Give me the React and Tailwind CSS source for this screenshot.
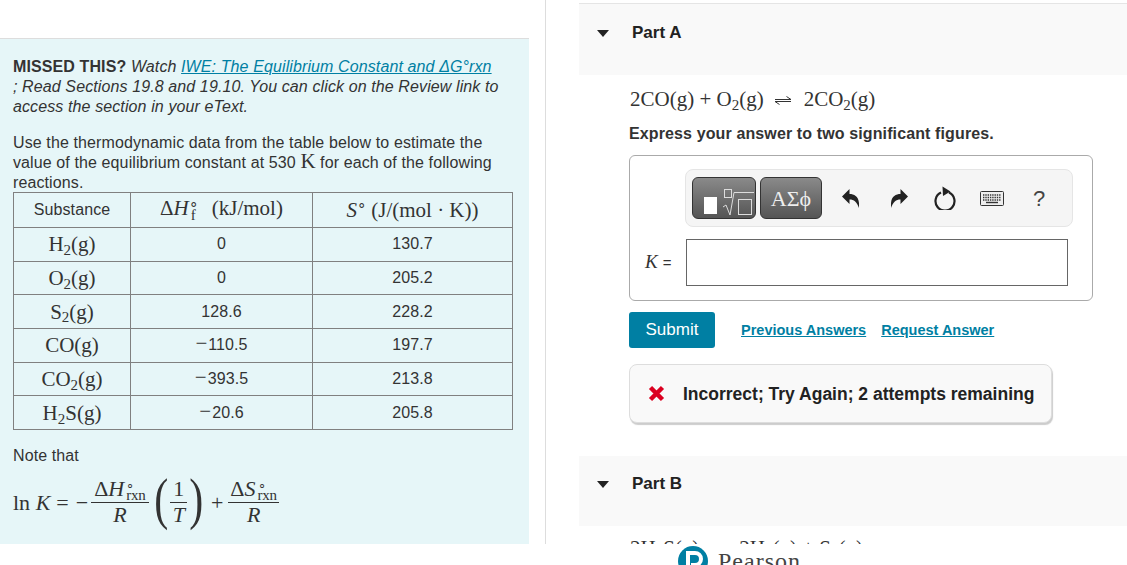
import React from "react";

const serif = "font-['Liberation_Serif',serif] tracking-normal";

const rows = [
  { name: "H", sub: "2", rest: "(g)", h: "0", s: "130.7" },
  { name: "O", sub: "2", rest: "(g)", h: "0", s: "205.2" },
  { name: "S", sub: "2", rest: "(g)", h: "128.6", s: "228.2" },
  { name: "CO", sub: "", rest: "(g)", h: "110.5", neg: true, s: "197.7" },
  { name: "CO", sub: "2", rest: "(g)", h: "393.5", neg: true, s: "213.8" },
  { name: "H", sub: "2", rest: "S(g)", h: "20.6", neg: true, s: "205.8" },
];

const Sub = ({ children }) => <sub className="text-[15px]">{children}</sub>;

const Rxn = () => (
  <span className="inline-flex flex-col items-start align-middle leading-none ml-[2px]">
    <span className="h-[9px] text-[13px] leading-[9px]">∘</span>
    <span className="text-[15px] leading-[13px] tracking-[-0.2px]">rxn</span>
  </span>
);

const Caret = () => (
  <svg width="12" height="7" viewBox="0 0 12 7" className="shrink-0">
    <path d="M0 0H12L6 7Z" fill="#222" />
  </svg>
);

const Band = ({ title, top }) => (
  <div className={`bg-[#f9f9f9] flex items-start pl-[18px] ${top ? "h-[72px] pt-[17px] border-t border-[#e5e5e5]" : "h-[70px] pt-[16px]"}`}>
    <div className="h-6 flex items-center">
      <Caret />
    </div>
    <span className="ml-[23px] font-bold text-[17px] leading-6 text-[#222]">{title}</span>
  </div>
);

const Harpoons = () => (
  <svg width="18" height="9" viewBox="0 0 18 9" className="inline-block ml-[10px] mr-[12px] align-[1px]">
    <path d="M1 3.5H17L12.5 0.5M17 5.5H1L5.5 8.5" fill="none" stroke="#333" strokeWidth="1" />
  </svg>
);

const ReplyIcon = ({ flip }) => (
  <svg width="17" height="19" viewBox="0 0 17 19" className={flip ? "-scale-x-100" : ""}>
    <path d="M0 7.5L7.5 0V5C13 5 18 8 17 19C15 13 12 10.5 7.5 10.5V15Z" fill="#222" />
  </svg>
);

const Reload = () => (
  <svg width="22" height="24" viewBox="0 0 22 24">
    <path d="M7 6.5A9.5 9.5 0 1 0 15 6.5" fill="none" stroke="#222" strokeWidth="2.2" />
    <path d="M8.5 0.5L16.5 5.5L9 10Z" fill="#222" />
  </svg>
);

const Keyboard = () => (
  <svg width="24" height="15" viewBox="0 0 24 15">
    <rect x="0.5" y="0.5" width="23" height="14" rx="1" fill="#eee" stroke="#333" />
    <path d="M3 4H21M3 6.5H21M3 9H21" stroke="#333" strokeWidth="1.4" strokeDasharray="1.4 0.9" />
    <path d="M6 11.5H18" stroke="#333" strokeWidth="1.4" />
  </svg>
);

const TemplateIcon = () => (
  <svg width="62" height="40" viewBox="0 0 62 40">
    <rect x="11" y="19" width="13" height="17" fill="#fff" />
    <rect x="31.5" y="11.5" width="7" height="8" fill="none" stroke="#ddd" />
    <path d="M30 29L33 27L37 37L41 14.5H61" fill="none" stroke="#ddd" />
    <rect x="45.5" y="21.5" width="13" height="15" fill="none" stroke="#ddd" />
  </svg>
);

export default function App() {
  return (
    <div className="w-[1127px] h-[565px] overflow-hidden bg-white text-[#333] font-['Liberation_Sans',Arial,sans-serif]">
      <div className="flex h-[544px]">
        {/* left column */}
        <div className="w-[546px] shrink-0 border-r border-[#ddd] pt-[38px]">
          <div className="w-[529px] h-[506px] bg-[#e6f6f8] border-t border-[#ddd] pl-[13px] pr-4 pt-[18px] text-[16px] leading-5 tracking-[0.11px]">
            <p className="mb-4 w-[490px]">
              <b>MISSED THIS?</b>{" "}
              <i>
                Watch{" "}
                <a className="text-[#007fa3] underline">IWE: The Equilibrium Constant and ΔG°rxn</a>
                <br />
                ; Read Sections 19.8 and 19.10. You can click on the Review link to access the section in your eText.
              </i>
            </p>
            <p className="w-[490px]">
              Use the thermodynamic data from the table below to estimate the value of the equilibrium constant at 530{" "}
              <span className={`${serif} text-[21px] leading-[0]`}>K</span> for each of the following reactions.
            </p>
            <table className="w-[500px] -mt-px border-collapse table-fixed border border-[#808080]">
              <thead>
                <tr className="h-[35px]">
                  <th className="w-[117px] border border-[#808080] font-normal">Substance</th>
                  <th className={`w-[182px] border border-[#808080] font-normal ${serif} text-[21px]`}>
                    Δ<i>H</i>
                    <span className="inline-flex flex-col align-middle leading-none text-[15px]">
                      <span className="h-[10px] leading-[10px]">∘</span>
                      <span className="leading-[13px]">f</span>
                    </span>
                    <span className="ml-[14px]">(kJ/mol)</span>
                  </th>
                  <th className={`border border-[#808080] font-normal ${serif} text-[21px]`}>
                    <i>S</i>
                    <sup className="text-[15px]">∘</sup> (J/(mol · K))
                  </th>
                </tr>
              </thead>
              <tbody>
                {rows.map((r, i) => (
                  <tr key={i} className="h-[33.7px] text-center">
                    <td className={`border border-[#808080] ${serif} text-[21px] leading-6`}>
                      {r.name}
                      {r.sub && <Sub>{r.sub}</Sub>}
                      {r.rest}
                    </td>
                    <td className="border border-[#808080]">
                      {r.neg && <span className={`mr-px ${serif} text-[21px] leading-[0]`}>−</span>}
                      {r.h}
                    </td>
                    <td className="border border-[#808080]">{r.s}</td>
                  </tr>
                ))}
              </tbody>
            </table>
            <p className="mt-4">Note that</p>
            <div className={`mt-[4px] flex items-center h-[66px] ${serif} text-[22px] leading-6 whitespace-nowrap`}>
              <span>
                ln <i>K</i>
              </span>
              <span className="ml-[6px]">=</span>
              <span className="ml-[7px]">−</span>
              <div className="flex flex-col items-center ml-[3px]">
                <span className="px-[3px] h-[26px] border-b border-[#333]">
                  Δ<i>H</i>
                  <Rxn />
                </span>
                <i className="h-[26px]">R</i>
              </div>
              <span className="ml-[3px] text-[56px] font-light leading-none -mt-2 scale-x-75">(</span>
              <div className="flex flex-col items-center">
                <span className="px-[3px] h-[26px] border-b border-[#333]">1</span>
                <i className="h-[26px]">T</i>
              </div>
              <span className="text-[56px] font-light leading-none -mt-2 scale-x-75">)</span>
              <span className="ml-[5px]">+</span>
              <div className="flex flex-col items-center ml-[5px]">
                <span className="px-[2px] h-[26px] border-b border-[#333]">
                  Δ<i>S</i>
                  <Rxn />
                </span>
                <i className="h-[26px]">R</i>
              </div>
            </div>
          </div>
        </div>

        {/* right column */}
        <div className="flex-1 pl-[33px] pt-[3px] overflow-hidden">
          <Band title="Part A" top />
          <div className="pl-[50px] pr-[34px]">
            <div className={`mt-[11px] h-[26px] pl-px ${serif} text-[21px] leading-[26px] whitespace-nowrap`}>
              2CO(g) + O<Sub>2</Sub>(g)
              <Harpoons />
              2CO<Sub>2</Sub>(g)
            </div>
            <p className="mt-[10px] font-bold text-[16px] leading-6 tracking-[0.12px]">Express your answer to two significant figures.</p>

            <div className="mt-[9px] w-[464px] h-[146px] border border-[#aaa] rounded-md pt-[13px] pl-[55px] pr-[19px]">
              <div className="h-[58px] bg-[#f5f5f5] border border-[#e5e5e5] rounded-lg flex items-center pl-[6px]">
                <button className="w-[64px] h-[42px] rounded-md border border-[#333] bg-gradient-to-b from-[#8a8a8a] to-[#555] flex items-center justify-center">
                  <TemplateIcon />
                </button>
                <button className={`ml-[4px] w-[62px] h-[42px] rounded-md border border-[#333] bg-gradient-to-b from-[#8a8a8a] to-[#555] text-[#eee] text-[22px] ${serif}`}>
                  ΑΣϕ
                </button>
                <div className="ml-[20px]">
                  <ReplyIcon />
                </div>
                <div className="ml-[32px]">
                  <ReplyIcon flip />
                </div>
                <div className="ml-[26px]">
                  <Reload />
                </div>
                <div className="ml-[24px]">
                  <Keyboard />
                </div>
                <span className="ml-[29px] text-[22px] text-[#444]">?</span>
              </div>
              <div className="mt-[12px] flex items-center -ml-[40px]">
                <span className="w-[41px] text-[15px] whitespace-nowrap">
                  <i className={`${serif} text-[19px]`}>K</i>
                  <span className="ml-[5px]">=</span>
                </span>
                <div className="w-[382px] h-[47px] border border-[#666] bg-white" />
              </div>
            </div>

            <div className="mt-[11px] flex items-center h-[36px]">
              <button className="w-[86px] h-[36px] rounded-[3px] bg-[#007fa3] text-white text-[17px]">Submit</button>
              <a className="ml-[26px] pt-px text-[14.5px] font-bold text-[#007fa3] underline">Previous Answers</a>
              <a className="ml-[15px] pt-px text-[14.5px] font-bold text-[#007fa3] underline">Request Answer</a>
            </div>

            <div className="mt-4 w-[423px] h-[59px] rounded-lg bg-[#f9f9f9] border border-[#ddd] shadow-[1px_2px_1px_#ccc] flex items-center pl-[18px]">
              <svg width="17" height="17" viewBox="0 0 17 17" className="shrink-0">
                <path d="M2.5 2.5L14.5 14.5M14.5 2.5L2.5 14.5" stroke="#db0020" strokeWidth="4.5" />
              </svg>
              <span className="ml-[18px] pt-px font-bold text-[17.5px] whitespace-nowrap text-[#222]">
                Incorrect; Try Again; 2 attempts remaining
              </span>
            </div>
          </div>
          <div className="mt-[33px]">
            <Band title="Part B" />
          </div>
          <div className={`pl-[51px] mt-[9px] ${serif} text-[21px] leading-[26px] whitespace-nowrap`}>
            2H<Sub>2</Sub>S(g)
            <Harpoons />
            2H<Sub>2</Sub>(g) + S<Sub>2</Sub>(g)
          </div>
        </div>
      </div>

      {/* footer */}
      <div className="flex items-start pl-[678px] pt-[2px]">
        <svg width="30" height="30" viewBox="0 0 30 30" className="shrink-0">
          <circle cx="15" cy="15" r="15" fill="#007fa3" />
          <path d="M10 25V7H17A6 6 0 0 1 17 19H13" fill="none" stroke="#fff" strokeWidth="4" />
        </svg>
        <span className="ml-[10px] mt-[1px] font-['Liberation_Serif',serif] text-[24px] leading-7 text-[#444] tracking-[1px]">Pearson</span>
      </div>
    </div>
  );
}
